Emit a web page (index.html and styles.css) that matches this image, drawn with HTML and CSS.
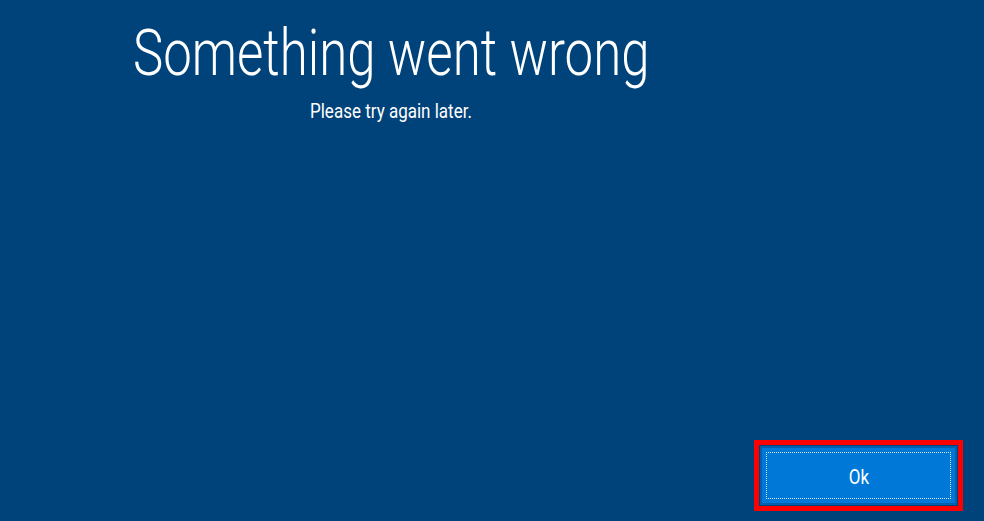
FILE: index.html
```html
<!DOCTYPE html>
<html lang="en">
<head>
<meta charset="utf-8">
<title>Something went wrong</title>
<link rel="stylesheet" href="styles.css">
</head>
<body>
<div class="page">
  <header class="message">
    <h1 class="title"><span class="title-text">Something went wrong</span></h1>
    <p class="subtitle"><span class="subtitle-text">Please try again later.</span></p>
  </header>
  <footer class="actions">
    <div class="highlight">
      <button class="btn" type="button"><span class="focus"><span class="btn-label">Ok</span></span></button>
    </div>
  </footer>
</div>
</body>
</html>
```
FILE: styles.css
```css
html, body {
  margin: 0;
  padding: 0;
  height: 100%;
}
body {
  background: #00427a;
  color: #ffffff;
  font-family: Roboto, "Open Sans", "Liberation Sans", sans-serif;
  overflow: hidden;
}
.page {
  height: 100vh;
  display: flex;
  flex-direction: column;
  justify-content: space-between;
}
.message {
  padding-left: 133px;
  padding-top: 15px;
  width: 515px;
}
.title {
  margin: 0;
  font-weight: 300;
  font-size: 65px;
  line-height: 76px;
  white-space: nowrap;
}
.title-text {
  display: inline-block;
  transform: scaleX(0.784);
  transform-origin: left center;
}
.subtitle {
  margin: 8px 0 0;
  text-align: center;
  font-size: 21px;
  line-height: 24px;
  font-weight: 400;
  white-space: nowrap;
}
.subtitle-text {
  display: inline-block;
  transform: scaleX(0.81);
}
.actions {
  display: flex;
  justify-content: flex-end;
  padding: 0 21px 10px 0;
}
.highlight {
  border: 5px solid #ff0000;
  padding: 1px;
  display: flex;
}
.btn {
  width: 197px;
  height: 59px;
  border: 2px solid #005fae;
  background: #0078d7;
  color: #ffffff;
  padding: 4px;
  margin: 0;
  display: flex;
  font-family: Roboto, "Open Sans", "Liberation Sans", sans-serif;
}
.focus {
  flex: 1;
  border: 1px dotted #d8e6f2;
  display: flex;
  align-items: center;
  justify-content: center;
  padding-top: 3px;
  font-size: 20px;
  font-weight: 400;
}
.btn-label {
  display: inline-block;
  transform: scaleX(0.85);
}
```
